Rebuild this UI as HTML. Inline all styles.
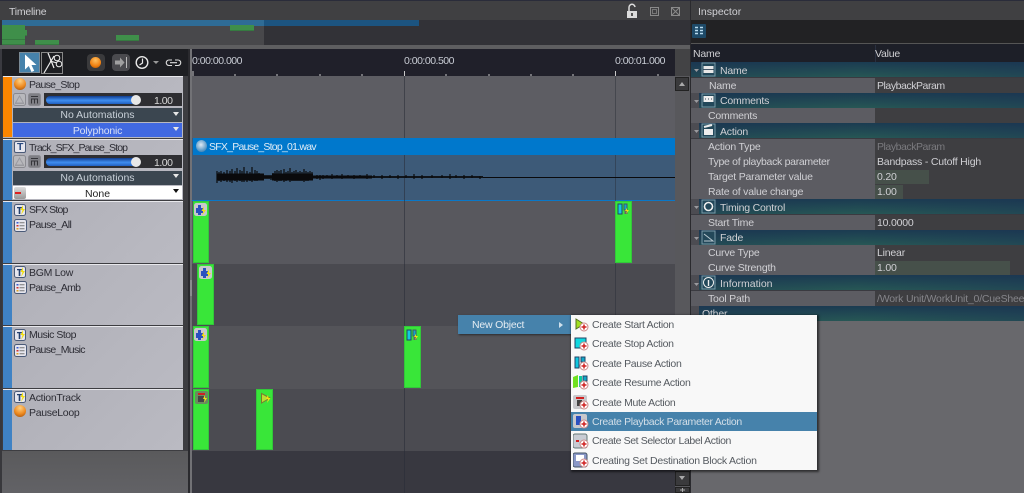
<!DOCTYPE html>
<html><head><meta charset="utf-8"><style>
html,body{margin:0;padding:0;background:#2a2a30}
#r{position:relative;width:1024px;height:493px;overflow:hidden;font-family:"Liberation Sans",sans-serif;font-size:10.5px;color:#ddd;background:#3a3a40;filter:blur(.35px)}
#r div,#r svg{position:absolute;display:block}
.t{white-space:nowrap;line-height:14px;height:14px}
.dk{color:#2c2c34;margin-top:1px}
.lt{color:#c8ccd4;margin-top:1px;letter-spacing:-.5px}
.sec{left:691px;width:333px;height:15px;background:linear-gradient(90deg,rgba(28,58,84,.55),rgba(30,80,85,.25) 50%,rgba(28,58,84,.55)),linear-gradient(#1a3450,#2a5a55)}
.strip{left:691px;width:8px;height:15px;background:#4c4c52}
.nm{left:691px;width:184px;height:15px;background:#5c5c62}
.vl{left:875px;width:149px;height:15px;background:#3e3e41}
.ins{color:#d0d0d4;white-space:nowrap;line-height:15px;height:15px;margin-top:1px;letter-spacing:-.2px}
.tr{left:3px;width:180px;background:linear-gradient(135deg,#b0b0b8,#babac2);border-top:1px solid #e8e8ec}
.mi{left:592px;color:#555a60;white-space:nowrap;line-height:14px;height:14px;letter-spacing:-.33px}
.gr{background:#39e639;box-shadow:inset 0 0 0 1px #32c83a}
.ov{background:#3f8f4a;border-bottom:1px solid #357a40;box-sizing:border-box}
</style></head><body><div id="r">

<!-- title bars -->
<div style="left:0;top:0;width:1024px;height:1px;background:#2a2c3a"></div>
<div style="left:0;top:1px;width:690px;height:19px;background:#404042"></div>
<div style="left:691px;top:1px;width:333px;height:19px;background:#404042"></div>
<div class="t" style="left:9px;top:5px;color:#d0d0d4;letter-spacing:-.25px">Timeline</div>
<div class="t" style="left:698px;top:5px;color:#d0d0d4">Inspector</div>
<svg style="left:626px;top:3px" width="54" height="16" viewBox="0 0 54 16">
<rect x="1" y="8" width="10" height="7" fill="#dcdcdc"/><rect x="5" y="10" width="2" height="3" fill="#555"/>
<path d="M3 8V4.500a3 3 0 0 1 6-.4" fill="none" stroke="#dcdcdc" stroke-width="1.500"/>
<rect x="24.500" y="4.500" width="8" height="8" fill="none" stroke="#8a8a8a"/><rect x="26.500" y="6.500" width="4" height="4" fill="none" stroke="#777"/>
<rect x="45.500" y="4.500" width="8" height="8" fill="none" stroke="#8a8a8a"/><path d="M45.500 4.500l8 8M53.500 4.500l-8 8" stroke="#8a8a8a"/>
</svg>

<!-- overview -->
<div style="left:0;top:20px;width:690px;height:25px;background:#323237"></div>
<div style="left:2px;top:20px;width:262px;height:25px;background:#48484b"></div>
<div style="left:2px;top:20px;width:262px;height:6px;background:#2f6c96"></div>
<div style="left:264px;top:20px;width:155px;height:6px;background:#1c5480"></div>
<div class="ov" style="left:2px;top:25px;width:23px;height:6px"></div>
<div class="ov" style="left:2px;top:30px;width:25px;height:6px"></div>
<div class="ov" style="left:2px;top:35px;width:23px;height:5px"></div>
<div class="ov" style="left:2px;top:40px;width:23px;height:5px"></div>
<div class="ov" style="left:35px;top:40px;width:24px;height:5px"></div>
<div class="ov" style="left:116px;top:35px;width:23px;height:6px"></div>
<div class="ov" style="left:230px;top:25px;width:24px;height:6px"></div>
<div style="left:0;top:45px;width:690px;height:4px;background:#5e5e60"></div>

<!-- toolbar -->
<div style="left:2px;top:49px;width:188px;height:27px;background:#1d1e22"></div>
<div style="left:19px;top:52px;width:21px;height:21px;background:#4682ab;box-shadow:inset 0 0 0 1px #7a8a96"></div>
<svg style="left:19px;top:52px" width="46" height="22" viewBox="0 0 46 22">
<path d="M6 2.500v15l3.800-3.500 2.700 6 2.700-1.300-2.700-5.700H17.500z" fill="#fff"/>
<rect x="22.500" y="0.500" width="21" height="21" fill="none" stroke="#888"/>
<path d="M25 21L35 4M29 1l6 15" stroke="#eee" stroke-width="1.200" fill="none"/>
<circle cx="38" cy="6" r="2.800" fill="none" stroke="#eee"/><circle cx="40" cy="12" r="2.800" fill="none" stroke="#eee"/>
<path d="M31 9l7 2" stroke="#eee"/>
</svg>
<div style="left:87px;top:54px;width:18px;height:17px;background:#3a3a3c;border-radius:4px"></div>
<div style="left:90px;top:57px;width:11px;height:11px;border-radius:50%;background:radial-gradient(circle at 50% 30%,#ffc060,#f08010 60%,#a04a00)"></div>
<div style="left:112px;top:54px;width:18px;height:17px;background:#4a4a4e;border-radius:4px"></div>
<svg style="left:112px;top:54px" width="70" height="17" viewBox="0 0 70 17">
<path d="M3 6.500h5V3.500l4.500 5-4.500 5v-3H3z" fill="#a0a0a0"/><path d="M14.500 3v11" stroke="#bbb"/>
<circle cx="30" cy="8.500" r="5.800" fill="none" stroke="#e8e8e8" stroke-width="1.400"/><path d="M30.500 4.500v4.500l-3 2" stroke="#e8e8e8" fill="none" stroke-width="1.200"/>
<path d="M41 7h6l-3 3z" fill="#999"/>
<path d="M60 6h-3a2.700 2.700 0 0 0 0 5.500h3M63 6h3a2.700 2.700 0 0 1 0 5.500h-3M58 8.700h7" fill="none" stroke="#ddd" stroke-width="1.100"/>
</svg>

<!-- left tracks -->
<div style="left:0;top:76px;width:2px;height:417px;background:#38383c"></div>
<div style="left:2px;top:76px;width:186px;height:375px;background:#3d3d41"></div>
<div style="left:2px;top:451px;width:186px;height:42px;background:linear-gradient(#5a5a5c,#626266)"></div>
<div style="left:188px;top:49px;width:3px;height:444px;background:#2a2a2e"></div>
<div style="left:190px;top:49px;width:2px;height:444px;background:#727276"></div>
<div style="left:190px;top:280px;width:3px;height:16px;background:#8a8a8e"></div>

<div class="tr" style="top:76px;height:61px"></div>
<div class="tr" style="top:139px;height:60px"></div>
<div class="tr" style="top:201px;height:61px"></div>
<div class="tr" style="top:264px;height:60px"></div>
<div class="tr" style="top:326px;height:61px"></div>
<div class="tr" style="top:389px;height:60px"></div>
<div style="left:3px;top:77px;width:9px;height:60px;background:#fb8500"></div>
<div style="left:3px;top:140px;width:9px;height:60px;background:#3f82c4"></div>
<div style="left:3px;top:202px;width:9px;height:61px;background:#3f82c4"></div>
<div style="left:3px;top:265px;width:9px;height:60px;background:#3f82c4"></div>
<div style="left:3px;top:327px;width:9px;height:61px;background:#3f82c4"></div>
<div style="left:3px;top:390px;width:9px;height:60px;background:#3f82c4"></div>

<!-- button icons -->
<svg style="left:13px;top:93px" width="30" height="75" viewBox="0 0 30 75">
<defs><g id="bt"><rect x=".5" y=".5" width="12" height="12" rx="2" fill="#b8b8bc" stroke="#8a8a90"/><path d="M2.500 10l4-7 4 7z" fill="none" stroke="#9a9aa0"/><path d="M2 10.500h9" stroke="#9a9aa0"/>
<rect x="15.500" y=".5" width="12" height="12" rx="2" fill="#7f7f85" stroke="#8a8a90"/><path d="M18 3.500h7M18.500 10.500V6h6v4.500M21.500 6v4.500" stroke="#35353a" fill="none"/></g></defs>
<use href="#bt"/><use href="#bt" y="62"/></svg>

<!-- track 1 -->
<div style="left:14px;top:78px;width:12px;height:12px;border-radius:50%;background:radial-gradient(circle at 50% 25%,#ffd080,#ee8a20 55%,#9a4a08)"></div>
<div class="t dk" style="left:29px;top:77px;letter-spacing:-.7px">Pause_Stop</div>
<div style="left:44px;top:93px;width:138px;height:13px;background:#2e2e32"></div>
<div style="left:46px;top:96px;width:93px;height:8px;border-radius:4px;background:linear-gradient(#123e90,#3f8ef0 55%,#2160c0)"></div>
<div style="left:131px;top:95px;width:10px;height:10px;border-radius:50%;background:#e8e8e8"></div>
<div class="t" style="left:154px;top:94px;color:#d8d8d8;letter-spacing:-.5px">1.00</div>
<div style="left:13px;top:108px;width:169px;height:14px;background:#3b4650"></div>
<div class="t" style="left:13px;top:108px;width:169px;text-align:center;color:#c8d0d8">No Automations</div>
<div style="left:13px;top:123px;width:169px;height:14px;background:#4169e1"></div>
<div class="t" style="left:13px;top:124px;width:169px;text-align:center;color:#d8e0f8;letter-spacing:-.2px">Polyphonic</div>
<svg style="left:172px;top:110px" width="8" height="24" viewBox="0 0 8 24"><path d="M1 2h6l-3 4zM1 17h6l-3 4z" fill="#e8e8e8"/></svg>

<!-- track 2 -->
<div style="left:14px;top:141px;width:12px;height:12px;background:#e6e6ee;border:1px solid #4a5a78;border-radius:2px;box-sizing:border-box"></div>
<div class="t" style="left:17px;top:140px;color:#2a4a80;font-weight:bold">T</div>
<div class="t dk" style="left:29px;top:140px;letter-spacing:-.85px">Track_SFX_Pause_Stop</div>
<div style="left:44px;top:155px;width:138px;height:13px;background:#2e2e32"></div>
<div style="left:46px;top:158px;width:93px;height:8px;border-radius:4px;background:linear-gradient(#123e90,#3f8ef0 55%,#2160c0)"></div>
<div style="left:131px;top:157px;width:10px;height:10px;border-radius:50%;background:#e8e8e8"></div>
<div class="t" style="left:154px;top:156px;color:#d8d8d8;letter-spacing:-.5px">1.00</div>
<div style="left:13px;top:171px;width:169px;height:14px;background:#3b4650"></div>
<div class="t" style="left:13px;top:171px;width:169px;text-align:center;color:#c8d0d8">No Automations</div>
<div style="left:13px;top:186px;width:169px;height:13px;background:#fff"></div>
<div style="left:14px;top:187px;width:12px;height:12px;background:linear-gradient(#ddd,#999);border-radius:2px"></div>
<div style="left:15px;top:192px;width:6px;height:2px;background:#d22"></div>
<div class="t" style="left:13px;top:187px;width:169px;text-align:center;color:#222">None</div>
<svg style="left:172px;top:172px" width="8" height="24" viewBox="0 0 8 24"><path d="M1 2h6l-3 4z" fill="#e8e8e8"/><path d="M1 17h6l-3 4z" fill="#111"/></svg>

<!-- track labels -->
<svg style="left:14px;top:203px" width="14" height="228" viewBox="0 0 14 228">
<defs>
<g id="ti"><rect x=".5" y=".5" width="11" height="11" rx="2" fill="#e6e6ee" stroke="#4a5a78"/><path d="M3 3h5v1.300H6.300V10H4.700V4.300H3z" fill="#24406e"/><path d="M9 1L6.500 6h2L7 11l4-6H9z" fill="#f4e010"/></g>
<g id="li"><rect x=".5" y=".5" width="12" height="12" rx="2" fill="#e6e6ee" stroke="#4a5a78"/><rect x="2.500" y="3" width="2" height="1.500" fill="#3a5ad0"/><rect x="2.500" y="6" width="2" height="1.500" fill="#d03030"/><rect x="2.500" y="9" width="2" height="1.500" fill="#e0a020"/><path d="M5.500 3.700h5M5.500 6.700h5M5.500 9.700h5" stroke="#777"/></g>
</defs>
<use href="#ti" y="1"/><use href="#li" y="16"/>
<use href="#ti" y="63"/><use href="#li" y="78"/>
<use href="#ti" y="126"/><use href="#li" y="141"/>
<use href="#ti" y="188"/>
</svg>
<div style="left:14px;top:405px;width:12px;height:12px;border-radius:50%;background:radial-gradient(circle at 50% 25%,#ffd080,#ee8a20 55%,#9a4a08)"></div>
<div class="t dk" style="left:29px;top:202px;letter-spacing:-.8px">SFX Stop</div>
<div class="t dk" style="left:29px;top:217px;letter-spacing:-.55px">Pause_All</div>
<div class="t dk" style="left:29px;top:265px;letter-spacing:-.3px">BGM Low</div>
<div class="t dk" style="left:29px;top:280px;letter-spacing:-.65px">Pause_Amb</div>
<div class="t dk" style="left:29px;top:327px;letter-spacing:-.5px">Music Stop</div>
<div class="t dk" style="left:29px;top:342px;letter-spacing:-.65px">Pause_Music</div>
<div class="t dk" style="left:29px;top:390px;letter-spacing:-.3px">ActionTrack</div>
<div class="t dk" style="left:29px;top:405px;letter-spacing:-.3px">PauseLoop</div>

<!-- ruler -->
<div style="left:192px;top:49px;width:483px;height:27px;background:#20202a"></div>
<div class="t lt" style="left:192px;top:53px">0:00:00.000</div>
<div class="t lt" style="left:404px;top:53px">0:00:00.500</div>
<div class="t lt" style="left:615px;top:53px">0:00:01.000</div>
<svg style="left:192px;top:70px" width="483" height="6" viewBox="0 0 483 6"><path d="M1 1v5M212.500 1v5M423.500 1v5M43 4v2M85 4v2M128 4v2M170 4v2M254 4v2M297 4v2M339 4v2M381 4v2M466 4v2" stroke="#c8c8c8"/></svg>

<!-- timeline rows -->
<div style="left:192px;top:76px;width:483px;height:62px;background:#5d5d63"></div>
<div style="left:192px;top:138px;width:483px;height:63px;background:#3d5a78"></div>
<div style="left:193px;top:138px;width:482px;height:17px;background:#0078cc"></div>
<div style="left:192px;top:200px;width:483px;height:1px;background:#0a78c8"></div>
<div style="left:192px;top:201px;width:483px;height:63px;background:#58585e"></div>
<div style="left:192px;top:264px;width:483px;height:62px;background:#4a4a50"></div>
<div style="left:192px;top:326px;width:483px;height:63px;background:#545459"></div>
<div style="left:192px;top:389px;width:483px;height:62px;background:#4b4b51"></div>
<div style="left:192px;top:451px;width:483px;height:42px;background:#383840"></div>
<div style="left:404px;top:76px;width:1px;height:417px;background:rgba(40,44,54,.55)"></div>
<div style="left:615px;top:76px;width:1px;height:375px;background:rgba(40,44,54,.45)"></div>
<div style="left:404px;top:138px;width:1px;height:17px;background:#0078cc"></div>
<div style="left:615px;top:138px;width:1px;height:17px;background:#0078cc"></div>

<!-- clip -->
<div style="left:196px;top:140px;width:11px;height:12px;border-radius:50%;background:radial-gradient(circle at 45% 40%,#dfeaf4,#5f9cc8 60%,#2a6a9e)"></div>
<div class="t" style="left:209px;top:140px;color:#e0ecf6;letter-spacing:-.75px">SFX_Pause_Stop_01.wav</div>
<svg style="left:192px;top:155px" width="483" height="45" viewBox="0 0 483 45">
<path d="M25 16v12M27 17v9M29 16v11M32 17v9M35 15v12M38 16v11M40 14v14M43 16v10M45 13v14M48 15v11M50 16v11M52 12v15M55 16v11M58 17v9M60 12v15M63 15v11M65 16v10M67 18v7M69 19v6M71 19v5M73 20v4M75 20v4M77 20v4M79 20v5M81 18v7M83 16v10M85 15v12M87 16v10M89 15v11M92 14v13M94 17v9M96 16v9M98 13v14M100 17v9M102 16v10M104 15v11M106 17v9M108 16v10M110 17v9M112 14v13M114 16v10M116 17v9M118 16v9M120 17v8M125 20v4M128 20v5M131 20v4M135 20v3M140 19v5M145 20v3M150 19v5M156 20v3M162 20v4M168 20v3M175 19v5M182 20v3M190 20v4M198 20v3M206 20v4M214 20v3M222 19v5M230 20v4M240 20v3M250 20v3M258 19v5M264 20v3M272 20v4M280 20v3M288 21v3" stroke="#0a0a0c" stroke-width="1.200" fill="none"/>
<path d="M25 22H72M80 22H121" stroke="#0a0a0c" stroke-width="7"/>
<path d="M72 22H80M121 22H180" stroke="#0a0a0c" stroke-width="3"/>
<path d="M180 22H291" stroke="#0a0a0c" stroke-width="1.800"/>
<path d="M291 22.500H483" stroke="#0a0a0c" stroke-width="1"/>
</svg>

<!-- green actions -->
<div class="gr" style="left:193px;top:201px;width:16px;height:62px"></div>
<div class="gr" style="left:197px;top:264px;width:17px;height:61px"></div>
<div class="gr" style="left:193px;top:326px;width:16px;height:62px"></div>
<div class="gr" style="left:193px;top:389px;width:16px;height:61px"></div>
<div class="gr" style="left:256px;top:389px;width:17px;height:61px"></div>
<div class="gr" style="left:404px;top:326px;width:17px;height:62px"></div>
<div class="gr" style="left:615px;top:201px;width:17px;height:62px"></div>
<svg style="left:194px;top:203px" width="14" height="14" viewBox="0 0 14 14"><defs><g id="pb"><rect width="13" height="13" rx="2.500" fill="#c8c8cc"/><rect x="2" y="5" width="7" height="5" fill="#2a50c0"/><rect x="4" y="2" width="3" height="10" fill="#2a50c0"/><path d="M10 3.500L7.500 8h2L8 12.500l4-5.500h-2z" fill="#f4e010"/></g></defs><use href="#pb"/></svg>
<svg style="left:199px;top:266px" width="14" height="14" viewBox="0 0 14 14"><use href="#pb"/></svg>
<svg style="left:194px;top:328px" width="14" height="14" viewBox="0 0 14 14"><use href="#pb"/></svg>
<svg style="left:195px;top:391px" width="14" height="14" viewBox="0 0 14 14"><rect width="13" height="13" rx="2" fill="#6a8a60"/><rect x="3" y="2" width="7" height="2" fill="#d02020"/><rect x="3" y="5" width="6" height="6" fill="#444"/><path d="M10 4L8 8h2L9 12l3-5h-2z" fill="#f4e010"/></svg>
<svg style="left:260px;top:392px" width="13" height="13" viewBox="0 0 13 13"><path d="M1.500 1.500L10 6l-8.500 5z" fill="#b8e030" stroke="#7a7a30"/><path d="M8 3L6 7h2L7 11l3.500-5h-2z" fill="#f4e010"/></svg>
<svg style="left:617px;top:203px" width="13" height="13" viewBox="0 0 13 13"><defs><g id="pa"><rect x="1" y="1" width="4" height="10" fill="#14c8e0" stroke="#246"/><rect x="7" y="1" width="3" height="6" fill="#14a8c8" stroke="#456"/><rect x="7.500" y="7" width="3" height="4" fill="#666"/><path d="M10 5L8 8h2l-1 3 3-4h-2z" fill="#f4e010"/></g></defs><use href="#pa"/></svg>
<svg style="left:406px;top:329px" width="13" height="13" viewBox="0 0 13 13"><use href="#pa"/></svg>

<!-- scrollbar -->
<div style="left:675px;top:49px;width:15px;height:27px;background:#434345"></div>
<div style="left:675px;top:76px;width:15px;height:417px;background:#58585c"></div>
<div style="left:675px;top:77px;width:14px;height:14px;background:#3a3a3c;border:1px solid #222;box-sizing:border-box"></div>
<div style="left:675px;top:471px;width:15px;height:15px;background:#3a3a3c;border:1px solid #222;box-sizing:border-box"></div>
<div style="left:675px;top:487px;width:15px;height:6px;background:#3a3a3c;border:1px solid #222;box-sizing:border-box"></div>
<svg style="left:675px;top:77px" width="15" height="415" viewBox="0 0 15 415"><path d="M4 9h6l-3-4z" fill="#aaa"/><path d="M4 399h6l-3 4z" fill="#aaa"/><path d="M7.500 411v4M5 413h5" stroke="#aaa"/></svg>

<!-- inspector -->
<div style="left:690px;top:0;width:1px;height:493px;background:#2a2a2e"></div>
<div style="left:691px;top:20px;width:333px;height:23px;background:#222224"></div>
<div style="left:691px;top:43px;width:333px;height:1px;background:#555"></div>
<div style="left:691px;top:44px;width:333px;height:18px;background:#1d1f28"></div>
<div style="left:875px;top:45px;width:1px;height:17px;background:#2a3040"></div>
<svg style="left:692px;top:24px" width="14" height="14" viewBox="0 0 14 14"><rect width="14" height="14" rx="1" fill="#1e4a68"/><path d="M3 3.500h3M8 3.500h3M3 6.500h3M8 6.500h3M3 9.500h3M8 9.500h3" stroke="#b8dcf0" stroke-width="1.500"/></svg>
<div class="ins" style="left:693px;top:46px">Name</div>
<div class="ins" style="left:875px;top:46px">Value</div>
<div style="left:691px;top:321px;width:333px;height:172px;background:#68686c"></div>

<div class="sec" style="top:62px"></div>
<div class="nm" style="top:78px"></div><div class="vl" style="top:78px"></div>
<div class="sec" style="top:93px"></div><div class="strip" style="top:93px"></div>
<div class="nm" style="top:108px"></div><div class="vl" style="top:108px"></div>
<div class="sec" style="top:123px"></div><div class="strip" style="top:123px"></div>
<div class="nm" style="top:139px"></div><div class="vl" style="top:139px"></div>
<div class="nm" style="top:154px"></div><div class="vl" style="top:154px"></div>
<div class="nm" style="top:169px"></div><div class="vl" style="top:169px"></div>
<div class="nm" style="top:184px"></div><div class="vl" style="top:184px"></div>
<div class="sec" style="top:199px"></div><div class="strip" style="top:199px"></div>
<div class="nm" style="top:215px"></div><div class="vl" style="top:215px"></div>
<div class="sec" style="top:230px"></div><div class="strip" style="top:230px"></div>
<div class="nm" style="top:245px"></div><div class="vl" style="top:245px"></div>
<div class="nm" style="top:260px"></div><div class="vl" style="top:260px"></div>
<div class="sec" style="top:275px"></div><div class="strip" style="top:275px"></div>
<div class="nm" style="top:291px"></div><div class="vl" style="top:291px"></div>
<div class="sec" style="top:306px"></div><div class="strip" style="top:306px"></div>
<div style="left:875px;top:170px;width:54px;height:14px;background:#46504a"></div>
<div style="left:875px;top:185px;width:28px;height:14px;background:#46504a"></div>
<div style="left:875px;top:261px;width:135px;height:14px;background:#46504a"></div>

<svg style="left:692px;top:62px" width="36" height="260" viewBox="0 0 36 260">
<path d="M2 7h5l-2.500 3zM2 38h5l-2.500 3zM2 68h5l-2.500 3zM2 144h5l-2.500 3zM2 175h5l-2.500 3zM2 221h5l-2.500 3z" fill="#9a9a9e"/>
<rect x="10" y="1" width="13" height="13" fill="#23485a" stroke="#7a9aa8"/><rect x="11.500" y="4" width="10" height="7" fill="#e8e8e8"/><path d="M11.500 7.500h10" stroke="#456"/>
<rect x="10" y="32" width="13" height="13" fill="#23485a" stroke="#7a9aa8"/><rect x="11.500" y="34" width="10" height="6" fill="#eee"/><path d="M13 37h1M16 37h1M19 37h1" stroke="#345"/>
<rect x="10" y="62" width="13" height="13" fill="#23485a" stroke="#7a9aa8"/><rect x="12" y="67" width="9" height="6" fill="#eee"/><path d="M12 65l8-2" stroke="#eee" stroke-width="2"/>
<rect x="10" y="138" width="13" height="13" fill="#23485a" stroke="#7a9aa8"/><circle cx="16.500" cy="144.500" r="4" fill="none" stroke="#eee" stroke-width="1.600"/>
<rect x="10" y="169" width="13" height="13" fill="#23485a" stroke="#7a9aa8"/><path d="M12 172l9 7h-9" fill="none" stroke="#b8c8d0"/>
<rect x="10" y="214" width="13" height="13" fill="#23485a" stroke="#7a9aa8"/><circle cx="16.500" cy="220.500" r="5" fill="none" stroke="#eee"/><path d="M16.500 218v6" stroke="#eee" stroke-width="1.400"/>
</svg>

<div class="ins" style="left:720px;top:63px">Name</div>
<div class="ins" style="left:709px;top:78px">Name</div><div class="ins" style="left:877px;top:78px;letter-spacing:-.45px">PlaybackParam</div>
<div class="ins" style="left:720px;top:93px">Comments</div>
<div class="ins" style="left:708px;top:108px">Comments</div>
<div class="ins" style="left:720px;top:124px">Action</div>
<div class="ins" style="left:708px;top:139px">Action Type</div><div class="ins" style="left:877px;top:139px;color:#7a7a7e;letter-spacing:-.45px">PlaybackParam</div>
<div class="ins" style="left:708px;top:154px;letter-spacing:-.3px">Type of playback parameter</div><div class="ins" style="left:877px;top:154px">Bandpass - Cutoff High</div>
<div class="ins" style="left:708px;top:169px">Target Parameter value</div><div class="ins" style="left:877px;top:169px">0.20</div>
<div class="ins" style="left:708px;top:184px">Rate of value change</div><div class="ins" style="left:877px;top:184px">1.00</div>
<div class="ins" style="left:720px;top:200px">Timing Control</div>
<div class="ins" style="left:708px;top:215px">Start Time</div><div class="ins" style="left:877px;top:215px">10.0000</div>
<div class="ins" style="left:720px;top:230px">Fade</div>
<div class="ins" style="left:708px;top:245px">Curve Type</div><div class="ins" style="left:877px;top:245px">Linear</div>
<div class="ins" style="left:708px;top:260px">Curve Strength</div><div class="ins" style="left:877px;top:260px">1.00</div>
<div class="ins" style="left:720px;top:276px;letter-spacing:0">Information</div>
<div class="ins" style="left:708px;top:291px">Tool Path</div><div class="ins" style="left:877px;top:291px;color:#85858a">/Work Unit/WorkUnit_0/CueSheet</div>
<div class="ins" style="left:702px;top:306px">Other</div>

<!-- context menu -->
<div style="left:458px;top:315px;width:113px;height:19px;background:#4682ab;box-shadow:1px 1px 2px rgba(0,0,0,.5)"></div>
<div class="t" style="left:472px;top:318px;color:#e4ecf2;letter-spacing:-.2px">New Object</div>
<svg style="left:558px;top:321px" width="6" height="8" viewBox="0 0 6 8"><path d="M1 1l4 3-4 3z" fill="#cfe0ec"/></svg>
<div style="left:571px;top:315px;width:246px;height:155px;background:#f8f8f8;box-shadow:1px 1px 2px 1px rgba(0,0,0,.55)"></div>
<div style="left:571px;top:412px;width:246px;height:19px;background:#4682ab"></div>
<div class="mi" style="top:318px">Create Start Action</div>
<div class="mi" style="top:337px">Create Stop Action</div>
<div class="mi" style="top:357px">Create Pause Action</div>
<div class="mi" style="top:376px">Create Resume Action</div>
<div class="mi" style="top:396px">Create Mute Action</div>
<div class="mi" style="top:415px;color:#d4dfe8">Create Playback Parameter Action</div>
<div class="mi" style="top:434px;letter-spacing:-.4px">Create Set Selector Label Action</div>
<div class="mi" style="top:454px;letter-spacing:-.25px">Creating Set Destination Block Action</div>
<svg style="left:573px;top:316px" width="16" height="154" viewBox="0 0 16 154">
<defs><g id="pl"><circle cx="11" cy="0" r="4" fill="#fff" stroke="#c88"/><path d="M8.500 0h5M11-2.500v5" stroke="#d02020" stroke-width="1.500"/></g></defs>
<path d="M3 3l8 5-8 5z" fill="#a0e020" stroke="#557020"/><use href="#pl" y="11"/>
<rect x="2" y="22" width="11" height="10" fill="#10d8e0" stroke="#246"/><use href="#pl" y="30"/>
<rect x="2" y="41" width="4" height="11" fill="#10c8e0" stroke="#246"/><rect x="8" y="41" width="4" height="5" fill="#10a8c8" stroke="#246"/><use href="#pl" y="50"/>
<path d="M0 61l5-2v12l-5 1z" fill="#70e020"/><rect x="6" y="60" width="3" height="11" fill="#10c8a0"/><rect x="10" y="60" width="4" height="5" fill="#10a8c8" stroke="#246"/><use href="#pl" y="69"/>
<rect x="0" y="79" width="14" height="14" rx="2" fill="#c8c8cc"/><rect x="3" y="81" width="8" height="2" fill="#d02020"/><rect x="4" y="84" width="5" height="6" fill="#444"/><use href="#pl" y="89"/>
<rect x="0" y="98" width="14" height="14" rx="2" fill="#c8c8cc"/><rect x="3" y="100" width="5" height="9" fill="#2a50c0"/><use href="#pl" y="108"/>
<rect x="0" y="118" width="14" height="14" rx="2" fill="#c8ccd4" stroke="#677"/><path d="M3 125h3" stroke="#d02020" stroke-width="2"/><use href="#pl" y="128"/>
<rect x="0" y="137" width="14" height="14" rx="2" fill="#8a98c8" stroke="#456"/><rect x="3" y="139" width="8" height="6" fill="#fff"/><use href="#pl" y="147"/>
</svg>
</div></body></html>
